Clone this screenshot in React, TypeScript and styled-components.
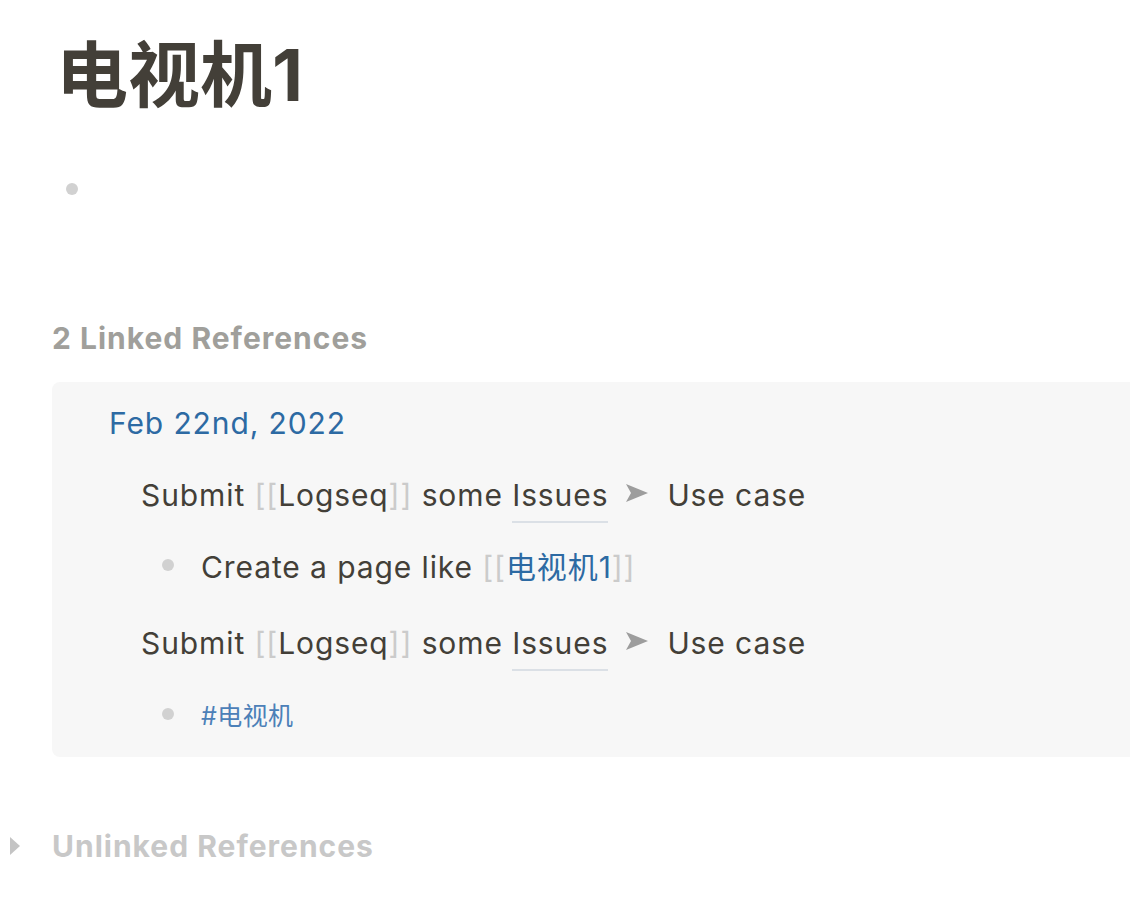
import React from "react";
import styled, { createGlobalStyle } from "styled-components";

const Global = createGlobalStyle`
  html, body { margin: 0; padding: 0; background: #ffffff; }
  body {
    font-family: Inter, "Noto Sans CJK SC", sans-serif;
    color: #433f38;
    overflow-x: hidden;
    -webkit-font-smoothing: antialiased;
  }
`;

const Page = styled.div`
  width: 1130px;
  height: 900px;
  padding-top: 33px;
  box-sizing: border-box;
`;

const Main = styled.div`
  padding-left: 52px;
`;

const Title = styled.h1`
  margin: 0 0 0 4px;
  font-size: 72px;
  line-height: 84px;
  font-weight: 700;
  color: #433f38;
`;

const EmptyBlock = styled.div`
  margin-top: 52px;
  height: 40px;
  display: flex;
  align-items: center;
  padding-left: 14px;
`;

const Dot = styled.span`
  width: 12px;
  height: 12px;
  border-radius: 50%;
  background: #d1d1d1;
  flex: none;
`;

const SectionHeading = styled.h2<{ $muted?: boolean }>`
  margin: 0;
  font-size: 30px;
  line-height: 40px;
  font-weight: 700;
  letter-spacing: 1px;
  color: ${(p) => (p.$muted ? "#c8c8c8" : "#a09f9b")};
`;

const LinkedHeading = styled(SectionHeading)`
  margin-top: 109px;
`;

const Panel = styled.div`
  margin-top: 24px;
  background: #f7f7f7;
  border-radius: 8px 0 0 8px;
  padding: 21px 0 23px 57px;
  letter-spacing: 0.9px;
`;

const DateLink = styled.div`
  font-size: 30px;
  line-height: 40px;
  color: #2d6aa3;
`;

const Breadcrumb = styled.div<{ $gap: number }>`
  margin-top: ${(p) => p.$gap}px;
  padding-left: 32px;
  font-size: 30px;
  line-height: 40px;
  height: 40px;
  white-space: pre;
`;

const Bracket = styled.span`
  color: #cbcbcb;
`;

const Crumb = styled.span<{ $underline?: boolean }>`
  padding-bottom: ${(p) => (p.$underline ? "8px" : "0")};
  border-bottom: ${(p) => (p.$underline ? "2px solid #dbe0e6" : "none")};
`;

const Arrow = styled.svg`
  display: inline-block;
  width: 22px;
  height: 18px;
  margin: 0 19px 0 18px;
  vertical-align: 4px;
`;

const Child = styled.div<{ $gap: number; $small?: boolean }>`
  margin-top: ${(p) => p.$gap}px;
  padding-left: 53px;
  display: flex;
  align-items: center;
  height: 40px;
  font-size: ${(p) => (p.$small ? "25px" : "30px")};
`;

const ChildText = styled.span`
  margin-left: 27px;
  white-space: pre;
`;

const PageRef = styled.span`
  color: #2d6aa3;
`;

const Tag = styled.span`
  color: #4c80b8;
  margin-left: 27px;
  letter-spacing: 0.4px;
`;

const UnlinkedRow = styled.div`
  margin-top: 69px;
  display: flex;
  align-items: center;
`;

const Toggle = styled.div`
  width: 52px;
  padding-left: 10px;
  box-sizing: border-box;
  display: flex;
  align-items: center;
`;

const ArrowIcon = () => (
  <Arrow viewBox="0 0 22 18">
    <path d="M0 0 L22 9 L0 18 L5 9 Z" fill="#9d9d9d" />
  </Arrow>
);

const Source = ({ gap }: { gap: number }) => (
  <Breadcrumb $gap={gap}>
    Submit <Bracket>[[</Bracket>Logseq<Bracket>]]</Bracket> some{" "}
    <Crumb $underline>Issues</Crumb>
    <ArrowIcon />
    Use case
  </Breadcrumb>
);

export default function App() {
  return (
    <>
      <Global />
      <Page>
        <Main>
          <Title>电视机1</Title>
          <EmptyBlock>
            <Dot />
          </EmptyBlock>
          <LinkedHeading>2 Linked References</LinkedHeading>
          <Panel>
            <DateLink>Feb 22nd, 2022</DateLink>
            <Source gap={32} />
            <Child $gap={30}>
              <Dot />
              <ChildText>
                Create a page like <Bracket>[[</Bracket>
                <PageRef>电视机1</PageRef>
                <Bracket>]]</Bracket>
              </ChildText>
            </Child>
            <Source gap={38} />
            <Child $gap={31} $small>
              <Dot />
              <Tag>#电视机</Tag>
            </Child>
          </Panel>
        </Main>
        <UnlinkedRow>
          <Toggle>
            <svg width="10" height="18" viewBox="0 0 10 18">
              <path d="M0 0 L10 9 L0 18 Z" fill="#c4c4c4" />
            </svg>
          </Toggle>
          <SectionHeading $muted>Unlinked References</SectionHeading>
        </UnlinkedRow>
      </Page>
    </>
  );
}
